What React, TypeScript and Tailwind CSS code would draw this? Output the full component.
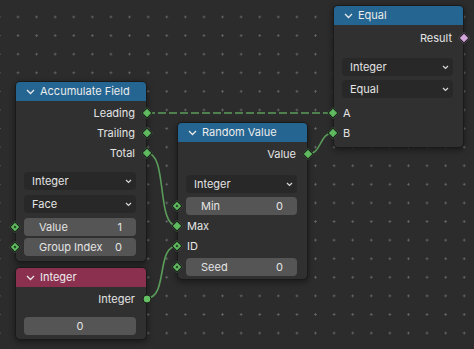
import React from "react";

type Kind = "diamond" | "dot" | "circle" | "pink";

const Socket = ({ kind, side }: { kind: Kind; side: "left" | "right" }) => {
  const pos =
    side === "left"
      ? "left-[-1px] -translate-x-1/2"
      : "right-[-1px] translate-x-1/2";
  if (kind === "circle") {
    return (
      <span
        className={`absolute top-1/2 -translate-y-1/2 ${pos} h-[9px] w-[9px] rounded-full border border-[#1a1a1a] bg-[#63c163]`}
      />
    );
  }
  const fill = kind === "pink" ? "bg-[#d2a6da]" : "bg-[#5fba5f]";
  return (
    <span
      className={`absolute top-1/2 -translate-y-1/2 ${pos} flex h-[8px] w-[8px] rotate-45 items-center justify-center border border-[#1a1a1a] ${fill}`}
    >
      {kind === "dot" && <span className="h-[2px] w-[2px] bg-[#1e3a1e]" />}
    </span>
  );
};

const Chevron = ({ small }: { small?: boolean }) =>
  small ? (
    <svg width="7" height="5" viewBox="0 0 7 5" className="shrink-0">
      <path d="M1 1 L3.5 3.5 L6 1" fill="none" stroke="#d8d8d8" strokeWidth="1.2" />
    </svg>
  ) : (
    <svg width="9" height="6" viewBox="0 0 9 6" className="shrink-0">
      <path d="M1 1 L4.5 4.5 L8 1" fill="none" stroke="#e8e8e8" strokeWidth="1.3" />
    </svg>
  );

const Node = ({
  className,
  header,
  title,
  children,
}: {
  className: string;
  header: string;
  title: string;
  children: React.ReactNode;
}) => (
  <div
    className={`absolute z-10 flex flex-col rounded-[5px] border border-[#1a1a1a] bg-[#303030] shadow-[0_2px_6px_rgba(0,0,0,0.45)] ${className}`}
  >
    <div
      className={`flex h-[19px] shrink-0 items-center gap-[5px] rounded-t-[4px] pl-[10px] text-[#ececec] ${header}`}
    >
      <Chevron />
      <span>{title}</span>
    </div>
    {children}
  </div>
);

const Output = ({ label, kind = "diamond", className = "" }: { label: string; kind?: Kind; className?: string }) => (
  <div className={`relative flex h-[20px] items-center justify-end pr-[11px] ${className}`}>
    <span>{label}</span>
    <Socket kind={kind} side="right" />
  </div>
);

const Input = ({ label, kind = "diamond", className = "" }: { label: string; kind?: Kind; className?: string }) => (
  <div className={`relative flex h-[20px] items-center pl-[9px] ${className}`}>
    <span>{label}</span>
    <Socket kind={kind} side="left" />
  </div>
);

const Dropdown = ({ label, className = "" }: { label: string; className?: string }) => (
  <div
    className={`ml-[8px] mr-[10px] flex h-[18px] items-center justify-between rounded-[4px] bg-[#282828] pl-[8px] pr-[4px] ${className}`}
  >
    <span>{label}</span>
    <Chevron small />
  </div>
);

const Field = ({
  label,
  value,
  socket,
  className = "",
}: {
  label: string;
  value: string;
  socket?: Kind;
  className?: string;
}) => (
  <div className={`relative ${className}`}>
    <div className="ml-[8px] mr-[10px] flex h-[18px] items-center justify-between rounded-[4px] bg-[#555555] pl-[15px] pr-[14px]">
      <span>{label}</span>
      <span>{value}</span>
    </div>
    {socket && <Socket kind={socket} side="left" />}
  </div>
);

export default function App() {
  return (
    <div className="relative h-[349px] w-[474px] overflow-hidden bg-[#2c2c2c] bg-[radial-gradient(circle,#6b6b6b_0.8px,transparent_1.4px)] bg-[size:18.6px_18.6px] bg-[position:8.7px_7.7px] font-['Inter',sans-serif] text-[11px] leading-none text-[#e4e4e4]">
      {/* links */}
      <svg className="absolute inset-0" width="474" height="349">
        <g fill="none" stroke="#5a9d5a" strokeWidth="1.6">
          <path d="M147 113 L333 113" strokeDasharray="8 3" />
          <path d="M147 153 C168 153 156 226 177 226" />
          <path d="M147 298 C168 298 156 246 177 246" />
          <path d="M308 154 C322 154 319 133 333 133" />
        </g>
      </svg>

      {/* Equal */}
      <Node className="left-[333px] top-[5px] h-[143px] w-[131px]" header="bg-[#246591]" title="Equal">
        <Output label="Result" kind="pink" className="mt-[3px]" />
        <Dropdown label="Integer" className="mt-[10px]" />
        <Dropdown label="Equal" className="mt-[4px]" />
        <Input label="A" className="mt-[5px]" />
        <Input label="B" />
      </Node>

      {/* Accumulate Field */}
      <Node className="left-[15px] top-[81px] h-[181px] w-[132px]" header="bg-[#246591]" title="Accumulate Field">
        <Output label="Leading" className="mt-[2px]" />
        <Output label="Trailing" />
        <Output label="Total" />
        <Dropdown label="Integer" className="mt-[9px]" />
        <Dropdown label="Face" className="mt-[5px]" />
        <Field label="Value" value="1" socket="dot" className="mt-[5px]" />
        <Field label="Group Index" value="0" socket="dot" className="mt-[2px]" />
      </Node>

      {/* Integer */}
      <Node className="left-[15px] top-[267px] h-[73px] w-[132px]" header="bg-[#8c3050]" title="Integer">
        <Output label="Integer" kind="circle" className="mt-[2px]" />
        <div className="ml-[8px] mr-[10px] mt-[8px] flex h-[18px] items-center justify-center rounded-[4px] bg-[#555555]">
          0
        </div>
      </Node>

      {/* Random Value */}
      <Node className="left-[177px] top-[122px] h-[158px] w-[131px]" header="bg-[#246591]" title="Random Value">
        <Output label="Value" className="mt-[2px]" />
        <Dropdown label="Integer" className="mt-[11px]" />
        <Field label="Min" value="0" socket="dot" className="mt-[4px]" />
        <Input label="Max" className="mt-[1px]" />
        <Input label="ID" kind="dot" />
        <Field label="Seed" value="0" socket="dot" className="mt-[2px]" />
      </Node>
    </div>
  );
}
